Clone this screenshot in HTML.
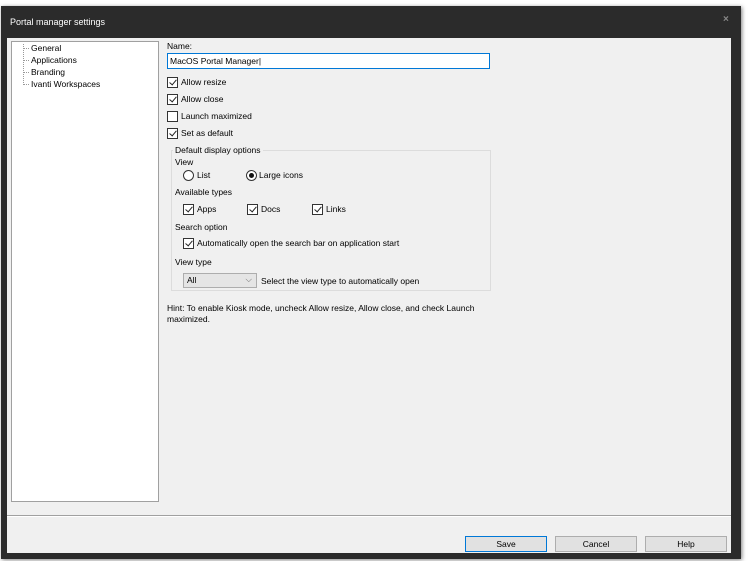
<!DOCTYPE html>
<html><head><style>
*{box-sizing:border-box;margin:0;padding:0}
body{width:748px;height:561px;background:#fff;position:relative;overflow:hidden;font-family:"Liberation Sans",sans-serif;font-size:8.5px;color:#000}
.a{position:absolute;white-space:nowrap}
.frame{position:absolute;left:1px;top:6px;width:740px;height:553px;background:#2b2b2b;box-shadow:1px 1px 4px rgba(0,0,0,.5)}
.content{position:absolute;left:7px;top:38px;width:724px;height:515px;background:#f0f0f0}
.cb{position:absolute;width:11px;height:11px;border:1px solid #333;background:#fff}
.cb.c::after{content:"";position:absolute;left:3px;top:0px;width:3px;height:6px;border:solid #222;border-width:0 1.3px 1.3px 0;transform:rotate(40deg)}
.rb{position:absolute;width:11px;height:11px;border:1px solid #333;border-radius:50%;background:#fff}
.btn{position:absolute;top:536px;width:82px;height:16px;background:#e1e1e1;border:1px solid #adadad;text-align:center;line-height:14px}
</style></head><body>
<div class="frame"></div>
<div class="a" style="left:10px;top:17px;color:#fff;font-size:9px">Portal manager settings</div>
<div class="a" style="left:723px;top:14px;color:#888;font-size:10px;font-weight:bold">×</div>
<div class="content"></div>
<div class="a" style="left:11px;top:41px;width:148px;height:461px;background:#fff;border:1px solid #a0a0a0"></div>
<div class="a" style="left:23px;top:44px;width:1px;height:41px;border-left:1px dotted #999"></div>
<div class="a" style="left:23px;top:48px;width:6px;border-top:1px dotted #999"></div>
<div class="a" style="left:23px;top:60px;width:6px;border-top:1px dotted #999"></div>
<div class="a" style="left:23px;top:72px;width:6px;border-top:1px dotted #999"></div>
<div class="a" style="left:23px;top:84px;width:6px;border-top:1px dotted #999"></div>
<div class="a" style="left:31px;top:43px">General</div>
<div class="a" style="left:31px;top:55px">Applications</div>
<div class="a" style="left:31px;top:67px">Branding</div>
<div class="a" style="left:31px;top:79px">Ivanti Workspaces</div>

<div class="a" style="left:167px;top:41px">Name:</div>
<div class="a" style="left:167px;top:53px;width:323px;height:16px;background:#fff;border:1px solid #0078d7;padding:2px 2px;line-height:10px">MacOS Portal Manager|</div>
<div class="cb c" style="left:167px;top:77px"></div><div class="a" style="left:181px;top:77px">Allow resize</div>
<div class="cb c" style="left:167px;top:94px"></div><div class="a" style="left:181px;top:94px">Allow close</div>
<div class="cb" style="left:167px;top:111px"></div><div class="a" style="left:181px;top:111px">Launch maximized</div>
<div class="cb c" style="left:167px;top:128px"></div><div class="a" style="left:181px;top:128px">Set as default</div>

<div class="a" style="left:171px;top:150px;width:320px;height:141px;border:1px solid #dcdcdc"></div>
<div class="a" style="left:173px;top:145px;background:#f0f0f0;padding:0 2px">Default display options</div>
<div class="a" style="left:175px;top:157px">View</div>
<div class="rb" style="left:183px;top:170px"></div><div class="a" style="left:197px;top:170px">List</div>
<div class="rb" style="left:246px;top:170px"></div><div class="a" style="left:249px;top:173px;width:5px;height:5px;border-radius:50%;background:#111"></div><div class="a" style="left:259px;top:170px">Large icons</div>
<div class="a" style="left:175px;top:187px">Available types</div>
<div class="cb c" style="left:183px;top:204px"></div><div class="a" style="left:197px;top:204px">Apps</div>
<div class="cb c" style="left:247px;top:204px"></div><div class="a" style="left:261px;top:204px">Docs</div>
<div class="cb c" style="left:312px;top:204px"></div><div class="a" style="left:326px;top:204px">Links</div>
<div class="a" style="left:175px;top:222px">Search option</div>
<div class="cb c" style="left:183px;top:238px"></div><div class="a" style="left:197px;top:238px">Automatically open the search bar on application start</div>
<div class="a" style="left:175px;top:257px">View type</div>
<div class="a" style="left:183px;top:273px;width:74px;height:15px;background:#e5e5e5;border:1px solid #adadad;padding:2px 3px;line-height:9px">All<span style="position:absolute;right:4px;top:1px;color:#666">⌵</span></div>
<div class="a" style="left:261px;top:276px">Select the view type to automatically open</div>
<div class="a" style="left:167px;top:303px;line-height:10.5px">Hint: To enable Kiosk mode, uncheck Allow resize, Allow close, and check Launch<br>maximized.</div>

<div class="a" style="left:7px;top:515px;width:724px;border-top:1px solid #a0a0a0;border-bottom:1px solid #fff"></div>
<div class="btn" style="left:465px;border:1px solid #0078d7">Save</div>
<div class="btn" style="left:555px">Cancel</div>
<div class="btn" style="left:645px">Help</div>
</body></html>
